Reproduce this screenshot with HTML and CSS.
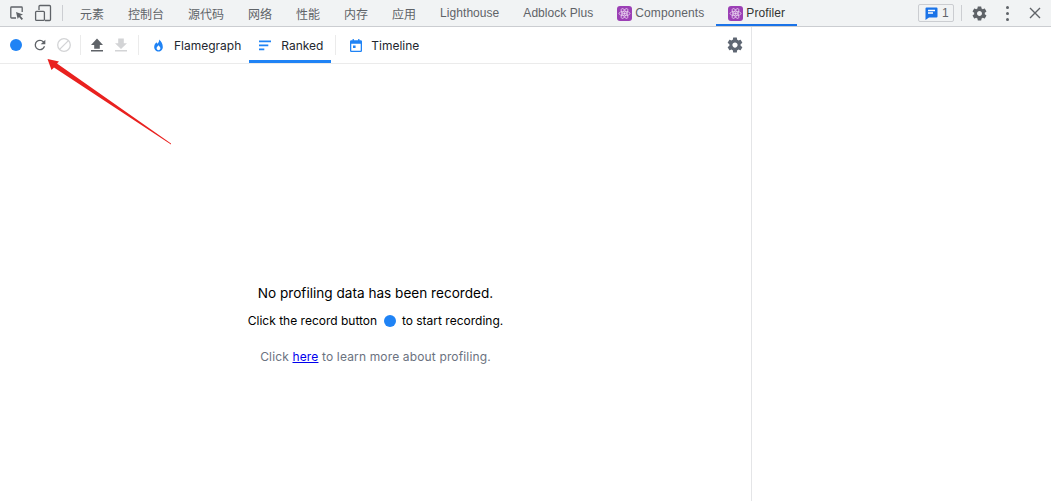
FILE: index.html
```html
<!DOCTYPE html>
<html lang="zh">
<head>
<meta charset="utf-8">
<title>Profiler</title>
<link rel="stylesheet" href="styles.css">
</head>
<body>
<div class="devtools">
  <header class="tabbar">
    <button class="tool tool-first" aria-label="Inspect">
      <svg width="18" height="18" viewBox="0 0 18 18"><path d="M8 14H3.6a.8.8 0 0 1-.8-.8V3.800a.8.8 0 0 1 .8-.8h9.800a.8.8 0 0 1 .8.8V8" fill="none" stroke="#5f6368" stroke-width="1.300"/><path d="M8 8l7 2.600-2.800 1.200 2.800 3-1.300 1.200-2.700-3L9.700 15z" fill="#5f6368"/></svg>
    </button>
    <button class="tool tool-device" aria-label="Device">
      <svg width="18" height="18" viewBox="0 0 18 18"><path d="M5 6V2.500a1 1 0 0 1 1-1h9.500a1 1 0 0 1 1 1v13a1 1 0 0 1-1 1H11" fill="none" stroke="#5f6368" stroke-width="1.300"/><rect x="1.600" y="7.300" width="8.800" height="9.100" rx="1" fill="none" stroke="#5f6368" stroke-width="1.300"/></svg>
    </button>
    <span class="bar-sep"></span>
    <nav class="tabs">
      <span class="tab">元素</span>
      <span class="tab">控制台</span>
      <span class="tab">源代码</span>
      <span class="tab">网络</span>
      <span class="tab">性能</span>
      <span class="tab">内存</span>
      <span class="tab">应用</span>
      <span class="tab tab-latin">Lighthouse</span>
      <span class="tab tab-latin">Adblock Plus</span>
      <span class="tab tab-react">
        <svg class="react-badge" width="15" height="15" viewBox="0 0 15 15"><rect width="15" height="15" rx="3" fill="#9b3fb5"/><g fill="none" stroke="#e9d3ef" stroke-width=".8"><ellipse cx="7.500" cy="7.500" rx="5.500" ry="2.200"/><ellipse cx="7.500" cy="7.500" rx="5.500" ry="2.200" transform="rotate(60 7.500 7.500)"/><ellipse cx="7.500" cy="7.500" rx="5.500" ry="2.200" transform="rotate(120 7.500 7.500)"/></g><circle cx="7.500" cy="7.500" r="1.200" fill="#e9d3ef"/></svg>
        <span>Components</span>
      </span>
      <span class="tab tab-react tab-active">
        <svg class="react-badge" width="15" height="15" viewBox="0 0 15 15"><rect width="15" height="15" rx="3" fill="#9b3fb5"/><g fill="none" stroke="#e9d3ef" stroke-width=".8"><ellipse cx="7.500" cy="7.500" rx="5.500" ry="2.200"/><ellipse cx="7.500" cy="7.500" rx="5.500" ry="2.200" transform="rotate(60 7.500 7.500)"/><ellipse cx="7.500" cy="7.500" rx="5.500" ry="2.200" transform="rotate(120 7.500 7.500)"/></g><circle cx="7.500" cy="7.500" r="1.200" fill="#e9d3ef"/></svg>
        <span>Profiler</span>
      </span>
    </nav>
    <div class="bar-right">
      <span class="issues">
        <svg width="13" height="13" viewBox="0 0 13 13"><path d="M1.500 0.500h10a1 1 0 0 1 1 1v8a1 1 0 0 1-1 1H4l-3.500 2.500V1.500a1 1 0 0 1 1-1z" fill="#1a73e8"/><path d="M3 3.500h7M3 6h5" stroke="#fff" stroke-width="1.300"/></svg>
        <span>1</span>
      </span>
      <span class="bar-sep sep-right"></span>
      <svg class="gear-dt" width="17" height="17" viewBox="0 0 24 24"><path fill="#5f6368" d="M19.430 12.980c.04-.32.070-.64.070-.98s-.03-.66-.07-.98l2.110-1.650c.19-.15.240-.42.120-.64l-2-3.460c-.12-.22-.39-.3-.61-.22l-2.490 1c-.52-.4-1.080-.73-1.690-.98l-.38-2.650C14.460 2.180 14.250 2 14 2h-4c-.25 0-.46.180-.49.420l-.38 2.650c-.61.25-1.170.59-1.690.98l-2.490-1c-.23-.09-.49 0-.61.220l-2 3.460c-.13.220-.07.490.12.640l2.110 1.650c-.04.320-.07.650-.07.980s.03.660.07.980l-2.110 1.650c-.19.150-.24.420-.12.640l2 3.460c.12.220.39.300.61.220l2.490-1c.52.400 1.080.730 1.690.980l.38 2.650c.03.240.24.420.49.420h4c.25 0 .46-.18.490-.42l.38-2.650c.61-.25 1.170-.59 1.690-.98l2.490 1c.23.090.49 0 .61-.22l2-3.460c.12-.22.070-.49-.12-.64l-2.110-1.650zM12 15.500c-1.930 0-3.500-1.570-3.500-3.500s1.570-3.500 3.500-3.500 3.500 1.570 3.500 3.500-1.570 3.500-3.500 3.500z"/></svg>
      <span class="kebab"><i></i><i></i><i></i></span>
      <svg class="close" width="12" height="12" viewBox="0 0 12 12"><path d="M1 1l10 10M11 1L1 11" stroke="#5f6368" stroke-width="1.400"/></svg>
    </div>
  </header>

  <div class="workspace">
    <main class="profiler">
      <div class="toolbar">
        <span class="rec-dot"></span>
        <svg class="ic ic-reload" width="16" height="16" viewBox="0 0 24 24"><path fill="#5f6368" d="M17.650 6.350A7.960 7.960 0 0 0 12 4a8 8 0 1 0 7.730 10h-2.080A6 6 0 1 1 12 6c1.660 0 3.140.69 4.220 1.780L13 11h7V4l-2.350 2.350z"/></svg>
        <svg class="ic ic-clear" width="16" height="16" viewBox="0 0 16 16"><circle cx="8" cy="8" r="6.300" fill="none" stroke="#d3d4d6" stroke-width="1.300"/><path d="M3.600 12.400l8.800-8.800" stroke="#d3d4d6" stroke-width="1.300"/></svg>
        <span class="tb-sep sep-a"></span>
        <svg class="ic ic-up" width="14" height="14" viewBox="0 0 14 14"><path fill="#5f6368" d="M7 .5l6 6.500H9.800v3.800H4.200V7H1zM1 12h12v1.500H1z"/></svg>
        <svg class="ic ic-down" width="14" height="14" viewBox="0 0 14 14"><path fill="#d3d4d6" d="M4.200.5h5.600v4.800H13L7 11 1 5.300h3.200zM1 12h12v1.500H1z"/></svg>
        <span class="tb-sep sep-b"></span>
        <div class="view view-flame">
          <svg width="11" height="13" viewBox="0 0 14 16" preserveAspectRatio="none"><path fill="#1f83f5" d="M7.800.5c.4 2.600-1 3.800-2.300 5.300-.5-.5-.8-1.100-.9-1.900C2.700 5.300 1.500 7.500 1.500 9.800c0 3.100 2.500 5.700 5.500 5.700s5.500-2.600 5.500-5.700C12.500 6 10.500 2.700 7.800.5zM7 13.700c-1.400 0-2.400-1-2.400-2.300 0-1.200.8-2 2.400-3.700 1.600 1.700 2.400 2.500 2.400 3.700 0 1.300-1 2.300-2.400 2.300z"/></svg>
          <span>Flamegraph</span>
        </div>
        <div class="view view-ranked">
          <svg width="12" height="11" viewBox="0 0 12 11"><path fill="#1f83f5" d="M0 .5h12v1.700H0zM0 4.500h9.300v1.700H0zM0 8.500h5.300v1.700H0z"/></svg>
          <span>Ranked</span>
        </div>
        <span class="tb-sep sep-c"></span>
        <div class="view view-time">
          <svg width="12" height="13" viewBox="0 0 14 15" preserveAspectRatio="none"><path fill="#1f83f5" d="M3 0h1.500v1.500h5V0H11v1.500h1.500A1.500 1.500 0 0 1 14 3v10.500a1.500 1.500 0 0 1-1.500 1.500h-11A1.500 1.500 0 0 1 0 13.500V3a1.500 1.500 0 0 1 1.500-1.500H3zM1.500 5.500v8h11v-8zM3.500 7.500h3v3h-3z"/></svg>
          <span>Timeline</span>
        </div>
        <svg class="gear-rd" width="18" height="18" viewBox="0 0 24 24"><path fill="#5f6773" d="M19.430 12.980c.04-.32.070-.64.070-.98s-.03-.66-.07-.98l2.110-1.650c.19-.15.240-.42.120-.64l-2-3.460c-.12-.22-.39-.3-.61-.22l-2.490 1c-.52-.4-1.080-.73-1.690-.98l-.38-2.650C14.460 2.180 14.250 2 14 2h-4c-.25 0-.46.180-.49.420l-.38 2.650c-.61.25-1.170.59-1.690.98l-2.490-1c-.23-.09-.49 0-.61.220l-2 3.460c-.13.220-.07.490.12.640l2.110 1.650c-.04.320-.07.650-.07.980s.03.660.07.980l-2.110 1.650c-.19.150-.24.420-.12.640l2 3.460c.12.220.39.300.61.220l2.490-1c.52.400 1.080.730 1.690.980l.38 2.650c.03.240.24.420.49.420h4c.25 0 .46-.18.490-.42l.38-2.650c.61-.25 1.170-.59 1.690-.98l2.490 1c.23.090.49 0 .61-.22l2-3.460c.12-.22.070-.49-.12-.64l-2.110-1.650zM12 15.500c-1.930 0-3.500-1.570-3.500-3.500s1.570-3.500 3.500-3.500 3.500 1.570 3.500 3.500-1.570 3.500-3.500 3.500z"/></svg>
      </div>
      <div class="empty">
        <p class="empty-title">No profiling data has been recorded.</p>
        <p class="empty-hint">Click the record button <span class="inline-dot"></span> to start recording.</p>
        <p class="empty-more">Click <a href="#">here</a> to learn more about profiling.</p>
      </div>
    </main>
    <aside class="sidebar"></aside>
  </div>

  <svg class="arrow" width="130" height="92" viewBox="0 0 130 92"><path fill="#e9211f" d="M.5 1L12 3.500 10 5.500 124 85.500V86.500L7 9.500 4.500 12z"/></svg>
</div>
</body>
</html>
```
FILE: styles.css
```css
* { box-sizing: border-box; }
html, body { margin: 0; height: 100%; background: #fff; overflow: hidden; }
.devtools {
  position: relative;
  height: 501px;
  display: flex;
  flex-direction: column;
  font-family: "Inter", "Liberation Sans", "Noto Sans CJK SC", sans-serif;
}

/* top bar */
.tabbar {
  height: 27px;
  flex: none;
  display: flex;
  align-items: center;
  background: #f1f3f4;
  border-bottom: 1px solid #cbcdd1;
}
.tool {
  border: 0;
  padding: 0;
  background: none;
  display: flex;
  width: 18px;
  height: 18px;
}
.tool-first { margin-left: 8px; }
.tool-device { margin-left: 8px; }
.bar-sep { width: 1px; height: 16px; background: #ccced2; margin-left: 10px; flex: none; }
.tabs { display: flex; height: 26px; margin-left: 5px; }
.tab {
  display: flex;
  align-items: center;
  padding: 0 12px;
  font-family: "Liberation Sans", "Noto Sans CJK SC", sans-serif;
  font-size: 12px;
  color: #5f6368;
  white-space: nowrap;
}
.tab-latin { letter-spacing: .05px; }
.tab-react { gap: 3px; letter-spacing: .1px; }
.react-badge { flex: none; }
.tab-active { border-bottom: 2px solid #1a73e8; color: #333; padding-top: 2px; }
.bar-right { margin-left: auto; display: flex; align-items: center; height: 26px; }
.issues {
  width: 36px;
  height: 18px;
  border: 1px solid #cbcdd1;
  border-radius: 2px;
  display: flex;
  align-items: center;
  gap: 4px;
  padding-left: 6px;
  font-family: "Liberation Sans", sans-serif;
  font-size: 12px;
  color: #5f6368;
}
.sep-right { margin-left: 7px; }
.gear-dt { margin-left: 9px; }
.kebab { display: flex; flex-direction: column; gap: 3px; margin-left: 18px; }
.kebab i { display: block; width: 3px; height: 3px; border-radius: 50%; background: #5f6368; }
.close { margin-left: 20px; margin-right: 10px; }

/* workspace */
.workspace { flex: 1; display: flex; min-height: 0; }
.profiler { width: 752px; flex: none; border-right: 1px solid #e4e5e7; display: flex; flex-direction: column; }
.sidebar { flex: 1; }
.toolbar {
  height: 37px;
  flex: none;
  display: flex;
  align-items: center;
  border-bottom: 1px solid #ebebeb;
  padding-left: 10px;
}
.rec-dot { width: 12px; height: 12px; border-radius: 50%; background: #1f83f5; flex: none; }
.ic { flex: none; }
.ic-reload { margin-left: 10px; }
.ic-clear { margin-left: 8px; }
.tb-sep { width: 1px; height: 20px; background: #ebebeb; flex: none; }
.sep-a { margin-left: 8px; }
.ic-up { margin-left: 9px; }
.ic-down { margin-left: 10px; }
.sep-b { margin-left: 10px; }
.view {
  display: flex;
  align-items: center;
  height: 36px;
  font-size: 12px;
  color: #23272f;
  flex: none;
}
.view-flame { margin-left: 14px; gap: 10px; padding-right: 8px; }
.view-ranked { width: 82px; padding-left: 10px; gap: 10px; border-bottom: 3px solid #1f83f5; padding-top: 3px; }
.sep-c { margin-left: 4px; }
.view-time { margin-left: 14px; gap: 9px; }
.gear-rd { margin-left: auto; margin-right: 7px; flex: none; }

/* empty state */
.empty {
  flex: 1;
  display: flex;
  flex-direction: column;
  align-items: center;
  padding-top: 220px;
}
.empty p { margin: 0; white-space: nowrap; }
.empty-title { font-size: 13.6px; line-height: 18px; color: #000; }
.empty .empty-hint { font-size: 12px; line-height: 16px; color: #000; margin-top: 11px; display: flex; align-items: center; white-space: pre; }
.inline-dot { display: inline-block; width: 12px; height: 12px; border-radius: 50%; background: #1f83f5; margin: 0 3px; }
.empty .empty-more { font-size: 12px; line-height: 16px; color: #6b7280; margin-top: 20px; letter-spacing: .15px; }
.empty-more a { color: #0000ee; }

/* annotation over the page */
.arrow { position: absolute; left: 47px; top: 58px; }
```
